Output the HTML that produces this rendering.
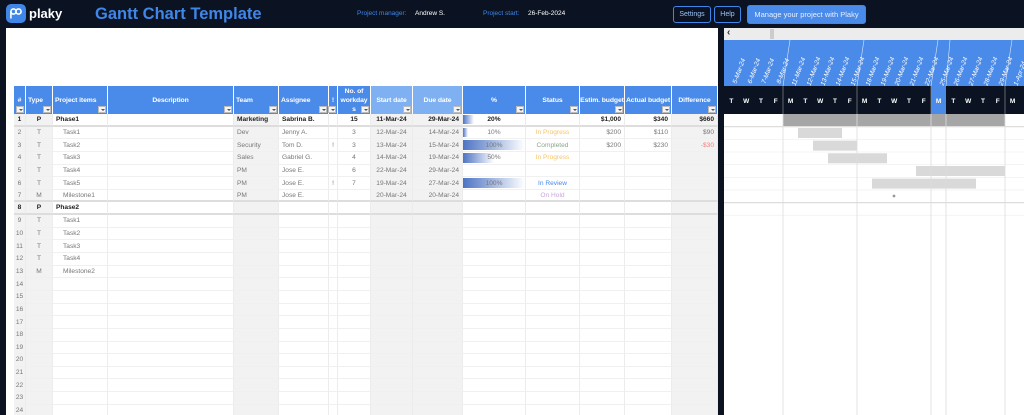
<!DOCTYPE html>
<html><head><meta charset="utf-8"><style>
*{box-sizing:border-box;margin:0;padding:0}
body{width:1024px;height:415px;overflow:hidden;background:#0b1322;font-family:"Liberation Sans",Arial,sans-serif;position:relative}
.abs{position:absolute}
#main{left:6px;top:28px;width:712px;height:387px;background:#fff}
.hdr{position:absolute;top:86px;left:14px;display:grid;grid-template-columns:12px 27px 55px 126px 45px 50px 9px 33px 42px 50px 63px 54px 45px 47px 46px;height:28px}
.hdr div{background:#4a8ae8;color:#fff;font-size:6.8px;font-weight:bold;position:relative;border-right:1px solid #fff;display:flex;align-items:center;justify-content:center;text-align:center;line-height:9px;white-space:nowrap;letter-spacing:-0.1px}
.hdr div.l{justify-content:flex-start;padding-left:2px}
.hdr div.lt{background:#7eb0f2}
.hdr div i{position:absolute;right:1px;bottom:1px;width:8px;height:7px;background:#f4f4f4;border:1px solid #bbb}
.hdr div i:after{content:"";position:absolute;left:2px;top:2px;border:2px solid transparent;border-top:2px solid #555}
.g{position:absolute;left:14px;top:114px;display:grid;grid-template-columns:12px 27px 55px 126px 45px 50px 9px 33px 42px 50px 63px 54px 45px 47px 46px;grid-auto-rows:12.65px;width:704px;height:301px;overflow:hidden}
.g div{font-size:6.6px;color:#777;border-right:1px solid #ececec;border-bottom:1px solid #f0f0f0;display:flex;align-items:center;white-space:nowrap;overflow:hidden;position:relative}
.g .s{background:#f2f2f2}
.c{justify-content:center}.r{justify-content:flex-end;padding-right:3px}.p{padding-left:3px}.pi{padding-left:10px}
.g .b{color:#222;font-weight:bold;border-bottom:2px solid #ddd}
.pb{position:absolute;left:0;top:1px;bottom:1px;background:linear-gradient(90deg,#4d74c4,#fff)}
.g div span{position:relative}
#gantt{left:724px;top:28px;width:300px;height:387px;background:#fff;overflow:hidden}
.dl{position:absolute;color:#fff;font-size:6.5px;font-style:italic;transform-origin:left center;transform:rotate(-70deg);white-space:nowrap}
.btn{position:absolute;top:6px;height:17px;border:1.5px solid #3f86e8;border-radius:3px;color:#9cc2f5;font-size:7px;display:flex;align-items:center;justify-content:center}
</style></head><body>
<div class="abs" style="left:6px;top:4px;width:20px;height:19px;background:#3f86e8;border-radius:5px"></div>
<svg class="abs" style="left:9px;top:7px" width="14" height="13" viewBox="0 0 14 13"><circle cx="4.5" cy="4.5" r="2.6" fill="none" stroke="#fff" stroke-width="1.6"/><circle cx="9.5" cy="4.5" r="2.6" fill="none" stroke="#fff" stroke-width="1.6"/><path d="M1.9 4.5V11.5" stroke="#fff" stroke-width="1.6"/></svg>
<div class="abs" style="left:29px;top:6px;color:#fff;font-size:13px;font-weight:bold">plaky</div>
<div class="abs" style="left:95px;top:5px;color:#3f86e8;font-size:16.5px;font-weight:bold">Gantt Chart Template</div>
<div class="abs" style="left:357px;top:10px;color:#3f86e8;font-size:6.5px">Project manager:</div>
<div class="abs" style="left:415px;top:10px;color:#fff;font-size:6.5px">Andrew S.</div>
<div class="abs" style="left:483px;top:10px;color:#3f86e8;font-size:6.5px">Project start:</div>
<div class="abs" style="left:528px;top:10px;color:#fff;font-size:6.5px">26-Feb-2024</div>
<div class="btn" style="left:673px;width:38px">Settings</div>
<div class="btn" style="left:714px;width:27px">Help</div>
<div class="btn" style="left:747px;width:119px;top:5px;height:19px;background:#4a8ae8;color:#e8f0fc;font-size:7.5px">Manage your project with Plaky</div>

<div id="main" class="abs"></div>
<div class="hdr">
<div><i></i>#</div><div class="l">Type<i></i></div><div class="l">Project items<i></i></div><div>Description<i></i></div><div class="l">Team<i></i></div><div class="l">Assignee<i></i></div><div>!<i></i></div><div>No. of<br>workday<br>s<i></i></div><div class="lt">Start date<i></i></div><div class="lt">Due date<i></i></div><div>%<i></i></div><div>Status<i></i></div><div>Estim. budget<i></i></div><div>Actual budget<i></i></div><div>Difference<i></i></div>
</div>
<div class="g">
<div class="s c b">1</div><div class="s c b">P</div><div class="p b">Phase1</div><div class="b"></div><div class="s p b">Marketing</div><div class="p b">Sabrina B.</div><div class="b"></div><div class="c b">15</div><div class="s c b">11-Mar-24</div><div class="s r b">29-Mar-24</div><div class="c b"><i class="pb" style="width:11px"></i><span>20%</span></div><div class="b"></div><div class="r b">$1,000</div><div class="r b">$340</div><div class="s r b">$660</div>
<div class="s c">2</div><div class="s c">T</div><div class="pi">Task1</div><div></div><div class="s p">Dev</div><div class="p">Jenny A.</div><div></div><div class="c">3</div><div class="s c">12-Mar-24</div><div class="s r">14-Mar-24</div><div class="c"><i class="pb" style="width:5px"></i><span>10%</span></div><div class="c" style="color:#f7c46a">In Progress</div><div class="r">$200</div><div class="r">$110</div><div class="s r">$90</div>
<div class="s c">3</div><div class="s c">T</div><div class="pi">Task2</div><div></div><div class="s p">Security</div><div class="p">Tom D.</div><div class="c">!</div><div class="c">3</div><div class="s c">13-Mar-24</div><div class="s r">15-Mar-24</div><div class="c"><i class="pb" style="width:62px"></i><span>100%</span></div><div class="c" style="color:#8aa58a">Completed</div><div class="r">$200</div><div class="r">$230</div><div class="s r" style="color:#f08080">-$30</div>
<div class="s c">4</div><div class="s c">T</div><div class="pi">Task3</div><div></div><div class="s p">Sales</div><div class="p">Gabriel G.</div><div></div><div class="c">4</div><div class="s c">14-Mar-24</div><div class="s r">19-Mar-24</div><div class="c"><i class="pb" style="width:31px"></i><span>50%</span></div><div class="c" style="color:#f7c46a">In Progress</div><div></div><div></div><div class="s"></div>
<div class="s c">5</div><div class="s c">T</div><div class="pi">Task4</div><div></div><div class="s p">PM</div><div class="p">Jose E.</div><div></div><div class="c">6</div><div class="s c">22-Mar-24</div><div class="s r">29-Mar-24</div><div></div><div></div><div></div><div></div><div class="s"></div>
<div class="s c">6</div><div class="s c">T</div><div class="pi">Task5</div><div></div><div class="s p">PM</div><div class="p">Jose E.</div><div class="c">!</div><div class="c">7</div><div class="s c">19-Mar-24</div><div class="s r">27-Mar-24</div><div class="c"><i class="pb" style="width:62px"></i><span>100%</span></div><div class="c" style="color:#4a8ae8">In Review</div><div></div><div></div><div class="s"></div>
<div class="s c b" style="color:#777;font-weight:normal">7</div><div class="s c b" style="color:#777;font-weight:normal">M</div><div class="pi b" style="color:#777;font-weight:normal">Milestone1</div><div class="b"></div><div class="s p b" style="color:#777;font-weight:normal">PM</div><div class="p b" style="color:#777;font-weight:normal">Jose E.</div><div class="b"></div><div class="b"></div><div class="s c b" style="color:#777;font-weight:normal">20-Mar-24</div><div class="s r b" style="color:#777;font-weight:normal">20-Mar-24</div><div class="b"></div><div class="c b" style="color:#c6a8d8;font-weight:normal">On Hold</div><div class="b"></div><div class="b"></div><div class="s b"></div>
<div class="s c b">8</div><div class="s c b">P</div><div class="p b">Phase2</div><div class="b"></div><div class="s b"></div><div class="b"></div><div class="b"></div><div class="b"></div><div class="s b"></div><div class="s b"></div><div class="b"></div><div class="b"></div><div class="b"></div><div class="b"></div><div class="s b"></div>
<div class="s c">9</div><div class="s c">T</div><div class="pi">Task1</div><div></div><div class="s"></div><div></div><div></div><div></div><div class="s"></div><div class="s"></div><div></div><div></div><div></div><div></div><div class="s"></div>
<div class="s c">10</div><div class="s c">T</div><div class="pi">Task2</div><div></div><div class="s"></div><div></div><div></div><div></div><div class="s"></div><div class="s"></div><div></div><div></div><div></div><div></div><div class="s"></div>
<div class="s c">11</div><div class="s c">T</div><div class="pi">Task3</div><div></div><div class="s"></div><div></div><div></div><div></div><div class="s"></div><div class="s"></div><div></div><div></div><div></div><div></div><div class="s"></div>
<div class="s c">12</div><div class="s c">T</div><div class="pi">Task4</div><div></div><div class="s"></div><div></div><div></div><div></div><div class="s"></div><div class="s"></div><div></div><div></div><div></div><div></div><div class="s"></div>
<div class="s c">13</div><div class="s c">M</div><div class="pi">Milestone2</div><div></div><div class="s"></div><div></div><div></div><div></div><div class="s"></div><div class="s"></div><div></div><div></div><div></div><div></div><div class="s"></div>
<div class="s c">14</div><div class="s"></div><div></div><div></div><div class="s"></div><div></div><div></div><div></div><div class="s"></div><div class="s"></div><div></div><div></div><div></div><div></div><div class="s"></div>
<div class="s c">15</div><div class="s"></div><div></div><div></div><div class="s"></div><div></div><div></div><div></div><div class="s"></div><div class="s"></div><div></div><div></div><div></div><div></div><div class="s"></div>
<div class="s c">16</div><div class="s"></div><div></div><div></div><div class="s"></div><div></div><div></div><div></div><div class="s"></div><div class="s"></div><div></div><div></div><div></div><div></div><div class="s"></div>
<div class="s c">17</div><div class="s"></div><div></div><div></div><div class="s"></div><div></div><div></div><div></div><div class="s"></div><div class="s"></div><div></div><div></div><div></div><div></div><div class="s"></div>
<div class="s c">18</div><div class="s"></div><div></div><div></div><div class="s"></div><div></div><div></div><div></div><div class="s"></div><div class="s"></div><div></div><div></div><div></div><div></div><div class="s"></div>
<div class="s c">19</div><div class="s"></div><div></div><div></div><div class="s"></div><div></div><div></div><div></div><div class="s"></div><div class="s"></div><div></div><div></div><div></div><div></div><div class="s"></div>
<div class="s c">20</div><div class="s"></div><div></div><div></div><div class="s"></div><div></div><div></div><div></div><div class="s"></div><div class="s"></div><div></div><div></div><div></div><div></div><div class="s"></div>
<div class="s c">21</div><div class="s"></div><div></div><div></div><div class="s"></div><div></div><div></div><div></div><div class="s"></div><div class="s"></div><div></div><div></div><div></div><div></div><div class="s"></div>
<div class="s c">22</div><div class="s"></div><div></div><div></div><div class="s"></div><div></div><div></div><div></div><div class="s"></div><div class="s"></div><div></div><div></div><div></div><div></div><div class="s"></div>
<div class="s c">23</div><div class="s"></div><div></div><div></div><div class="s"></div><div></div><div></div><div></div><div class="s"></div><div class="s"></div><div></div><div></div><div></div><div></div><div class="s"></div>
<div class="s c">24</div><div class="s"></div><div></div><div></div><div class="s"></div><div></div><div></div><div></div><div class="s"></div><div class="s"></div><div></div><div></div><div></div><div></div><div class="s"></div>
</div>

<div id="gantt" class="abs">
<div class="abs" style="left:0;top:0;width:300px;height:12px;background:#ececec"></div>
<div class="abs" style="left:46px;top:1px;width:4px;height:10px;background:#ccc"></div>
<div class="abs" style="left:3px;top:-1px;font-size:10px;color:#333;font-weight:bold">‹</div>
<div class="abs" style="left:0;top:12px;width:300px;height:46px;background:#4a8ae8"></div>
<div class="abs" style="left:0;top:58px;width:300px;height:28px;background:#0b1322"></div>
<div class="abs" style="left:207px;top:58px;width:15px;height:28px;background:#4a8ae8"></div>
<svg class="abs" style="left:0;top:12px" width="300" height="46"><g stroke="#fff" stroke-width="0.6" opacity="0.8"><path d="M59 46L66 0M133 46L140 0M207 46L214 0M222 46L226 0M281 46L288 0"/></g></svg>
<div class="dl" style="left:11px;top:52px">5-Mar-24</div>
<div class="dl" style="left:26px;top:52px">6-Mar-24</div>
<div class="dl" style="left:40px;top:52px">7-Mar-24</div>
<div class="dl" style="left:55px;top:52px">8-Mar-24</div>
<div class="dl" style="left:70px;top:54px">11-Mar-24</div>
<div class="dl" style="left:85px;top:54px">12-Mar-24</div>
<div class="dl" style="left:99px;top:54px">13-Mar-24</div>
<div class="dl" style="left:114px;top:54px">14-Mar-24</div>
<div class="dl" style="left:129px;top:54px">15-Mar-24</div>
<div class="dl" style="left:144px;top:54px">18-Mar-24</div>
<div class="dl" style="left:159px;top:54px">19-Mar-24</div>
<div class="dl" style="left:173px;top:54px">20-Mar-24</div>
<div class="dl" style="left:188px;top:54px">21-Mar-24</div>
<div class="dl" style="left:203px;top:54px">22-Mar-24</div>
<div class="dl" style="left:218px;top:54px">25-Mar-24</div>
<div class="dl" style="left:232px;top:54px">26-Mar-24</div>
<div class="dl" style="left:247px;top:54px">27-Mar-24</div>
<div class="dl" style="left:262px;top:54px">28-Mar-24</div>
<div class="dl" style="left:277px;top:54px">29-Mar-24</div>
<div class="dl" style="left:292px;top:54px">1-Apr-24</div>
<svg class="abs" style="left:0;top:58px" width="300" height="329" font-family="Liberation Sans, sans-serif" font-size="6.5" font-weight="bold" fill="#fff" text-anchor="middle">
<text x="7.4" y="17">T</text><text x="22.2" y="17">W</text><text x="37" y="17">T</text><text x="51.8" y="17">F</text>
<text x="66.6" y="17">M</text><text x="81.4" y="17">T</text><text x="96.2" y="17">W</text><text x="111" y="17">T</text><text x="125.8" y="17">F</text>
<text x="140.6" y="17">M</text><text x="155.4" y="17">T</text><text x="170.2" y="17">W</text><text x="185" y="17">T</text><text x="199.8" y="17">F</text>
<text x="214.6" y="17">M</text><text x="229.4" y="17">T</text><text x="244.2" y="17">W</text><text x="259" y="17">T</text><text x="273.8" y="17">F</text>
<text x="288.6" y="17">M</text>
<g stroke="#888" stroke-width="0.7"><path d="M59 0V28M133 0V28M207 0V28M281 0V28"/></g>
<g fill="none" stroke="#eee" stroke-width="0.6">
<path d="M0 40.6H300M0 53.3H300M0 66H300M0 78.6H300M0 91.3H300M0 103.9H300M0 116.6H300M0 129.2H300"/>
</g>
<rect x="59" y="28" width="222" height="12.6" fill="#a6a6a6"/>
<rect x="74" y="42" width="44" height="10" fill="#d9d9d9"/>
<rect x="89" y="54.6" width="44" height="10" fill="#d9d9d9"/>
<rect x="104" y="67.3" width="59" height="10" fill="#d9d9d9"/>
<rect x="192" y="80" width="89" height="10" fill="#d9d9d9"/>
<rect x="148" y="92.6" width="104" height="10" fill="#d9d9d9"/>
<circle cx="170" cy="110" r="1.4" fill="#999"/>
<g stroke="#ddd" stroke-width="0.8"><path d="M59 28V329M133 28V329M207 28V329M222 28V329M281 28V329"/></g>
<path d="M0 40.6H300M0 116.6H300" stroke="#ddd" stroke-width="1.2"/>
</svg>
</div>
</body></html>
